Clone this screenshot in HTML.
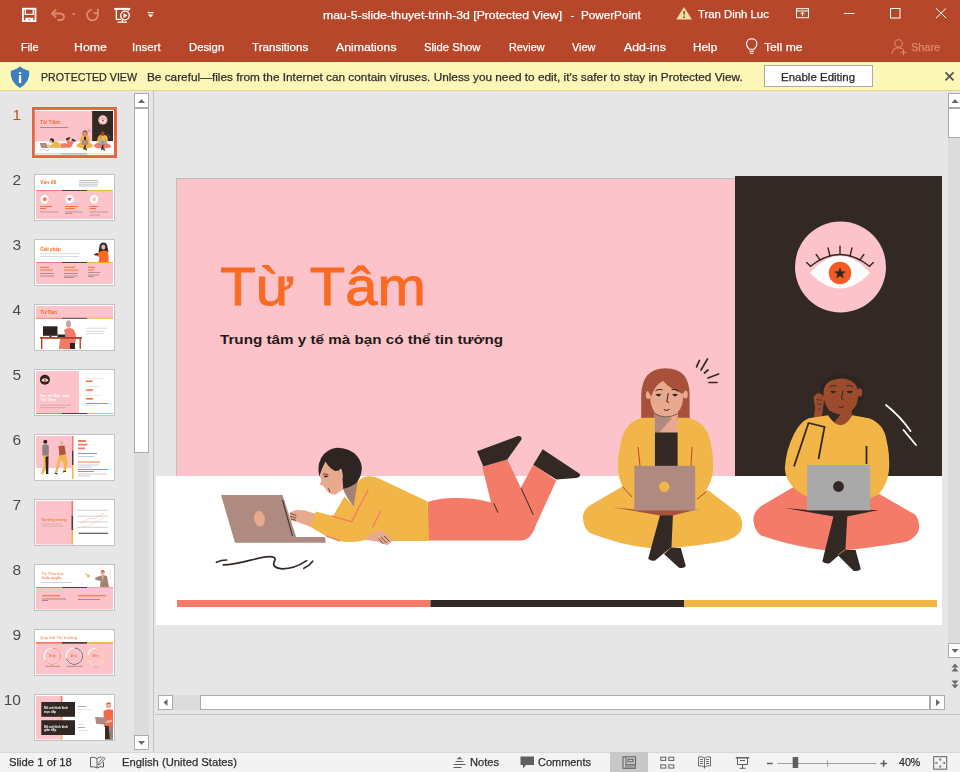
<!DOCTYPE html>
<html><head><meta charset="utf-8"><title>PowerPoint</title>
<style>
*{box-sizing:border-box;margin:0;padding:0}
html,body{width:960px;height:772px;overflow:hidden;background:#e6e6e6;font-family:"Liberation Sans",sans-serif;}
.abs{position:absolute}
#titlebar{position:absolute;left:0;top:0;width:960px;height:62px;background:#b7472a;color:#fff}
#titlebar .t{position:absolute;font-size:13px;white-space:nowrap;line-height:16px}
#tabs .t{top:39px;font-size:13px}
#pv{position:absolute;left:0;top:62px;width:960px;height:29px;background:#fcf7b6;border-bottom:1px solid #e0d98a;color:#333}
#pv .t{position:absolute;font-size:12px;white-space:nowrap;line-height:14px;top:8px}
.num{position:absolute;left:0;width:21px;text-align:right;font-size:15.5px;color:#4a4a4a;line-height:14px;will-change:transform}
.th{position:absolute;left:34px;width:81px;height:47px;background:#fff;border:1px solid #c6c6c6;overflow:hidden}
.th div{position:absolute}
.sb{position:absolute;background:#fff;border:1px solid #ababab}
#status{position:absolute;left:0;top:752px;width:960px;height:20px;background:#f3f3f3;color:#333}
#status .t{position:absolute;font-size:12px;white-space:nowrap;line-height:14px;top:3px}
.tx{position:absolute;white-space:nowrap;transform-origin:0 0;-webkit-text-stroke:.25px}
svg{position:absolute;overflow:visible}
</style></head><body>
<svg width="0" height="0" style="position:absolute">
<defs>
<symbol id="s1" viewBox="156 176 786 449" preserveAspectRatio="none">
 <rect x="156" y="476" width="786" height="149" fill="#fff"/>
 <rect x="176" y="178" width="560" height="298" fill="#bcc0bc"/>
 <rect x="177" y="179" width="559" height="297" fill="#fcc3ca"/>
 <rect x="735" y="176" width="207" height="300" fill="#332924"/>
 <rect x="177" y="600" width="253.5" height="7" fill="#f47b67"/>
 <rect x="430.5" y="600" width="253.5" height="7" fill="#332924"/>
 <rect x="684" y="600" width="253" height="7" fill="#f2b548"/>
 <!-- eye icon -->
 <circle cx="840.5" cy="267" r="45.5" fill="#fcc3ca"/>
 <path d="M810 273 Q840 239 870 273 Q840 304 810 273Z" fill="#fff"/>
 <circle cx="840" cy="273" r="11.3" fill="#f25c22"/>
 <path d="M840 267.2 L841.6 271.3 L846 271.5 L842.5 274.2 L843.7 278.4 L840 276 L836.3 278.4 L837.5 274.2 L834 271.5 L838.4 271.3Z" fill="#332924"/>
 <g stroke="#332924" stroke-width="1.4" fill="none" stroke-linecap="round">
  <path d="M810.5 266.3 Q840 242.7 869.5 266.3"/>
  <path d="M810.5 266.3 L806.7 262.5 M820 259.8 L816.2 254.5 M830 256 L828 248 M840 254.5 L840 246.3 M850 256 L852 248 M860 259.8 L863.8 254.5 M869.5 266.3 L873.3 262.5"/>
 </g>
 <!-- woman 1 lying -->
 <g>
  <!-- pants -->
  <path d="M428 502 C440 497 470 496 491 502.5 L482.3 467 L507.3 459.6 L520.8 487.7 L533.3 464.8 L556.3 480.4 L536 525 Q531 540.5 521 540.5 L428 540.5Z" fill="#f47b67"/>
  <path d="M493.7 503.3 L498 512.7 M521.2 488.3 L533.3 514.8" stroke="#332924" stroke-width="1" fill="none"/>
  <path d="M477 451.2 L518 436 Q522 435.5 521.5 439.5 L507.3 459.6 L483.3 466.5Z" fill="#332924"/>
  <path d="M542.7 449.2 L580 474 Q580.5 477.5 576 478 L556.3 479.5 L533.3 464.8Z" fill="#332924"/>
  <!-- neck -->
  <path d="M343 489 L358.5 481 L354 507 Q346 497 343 489Z" fill="#a58276"/>
  <!-- face -->
  <path d="M325.5 461 L320 476.3 L321.3 480 L320 484.6 L323.3 486 L325.3 488.5 L327.3 491.3 Q330 495 335.5 494.5 L344 488.7 L342 470 L335 462Z" fill="#e9a98f"/>
  <path d="M323 474.3 Q326 473.3 328.5 475 M328.5 488.3 Q330.3 490.8 329.5 492" stroke="#332924" stroke-width=".8" fill="none"/>
  <path d="M323.3 476 Q326 474.8 328.3 476 Q326 478.8 323.3 476Z" fill="#332924"/>
  <!-- hair -->
  <path d="M319.3 476.8 Q316.3 462 324 454 Q331 447.5 338 447.7 Q350 448 357 456 Q362.5 463 361.7 470 Q361 478 355.8 483.5 Q351 487 343.3 488.9 L342.6 480 Q343.2 474 341.8 470 Q340.5 467.3 339 470.5 L335 471 Q329 468 325.5 461.5 Q322 468 319.3 476.8Z" fill="#2e2522"/>
  <!-- hand left -->
  <path d="M289.5 512.5 L296.5 509.8 L305 510.5 L316 514 L311 527 L297 521.8 L290.5 520.5Z" fill="#e9a98f"/>
  <!-- torso -->
  <path d="M357.5 482.5 Q361 477 368 476.3 Q375 476 381 479.5 L427.7 501.5 L429 541 L392 541 L382 532 L370 538.5 Q355 544 338 541 L326.5 536.5 L310 526.5 L316 511.5 L333 516 L344.5 496.5 L353.7 506.5Z" fill="#f2b548"/>
  <!-- hand right -->
  <path d="M364 539.5 L372 532.5 L381 530.5 L387 535 L393.5 540 L387 545.3 L378 541.8Z" fill="#e9a98f"/>
  <path d="M368.3 489.2 L351.7 521.7 L331.7 515.8 M380.8 510.8 L372.5 527.5 M325.8 535.8 L340 540.8" stroke="#f47b67" stroke-width="1.3" fill="none"/>
  <path d="M290.5 513.5 L296.5 515.5 M290 516.3 L296 518 M291 519 L296 520.3 M381 537 L386.5 543 M384 536 L389.5 541.5 M378.5 538.5 L383.5 544" stroke="#332924" stroke-width=".7" fill="none"/>
  <!-- laptop -->
  <path d="M221 495 L282.5 495 L296.2 537 L325 537 L325.7 542.7 L235 542.7Z" fill="#ae8a81"/>
  <ellipse cx="259.5" cy="518.7" rx="5.3" ry="7.8" fill="#e9a98f" transform="rotate(-8 259.5 518.7)"/>
  <path d="M282.5 500 L292.5 536" stroke="#332924" stroke-width="1" fill="none"/>
  <!-- squiggle -->
  <path d="M216.5 562.3 Q221 560 226.7 560 M223.3 564.9 C238 565 255 558 266 556.8 C273 556 276.5 557.5 274.5 561 C272.5 565 274 568 282 568.8 C292 569 300 565 306.6 560.6 M303.9 568.3 Q309 566 312.7 561.2" stroke="#332924" stroke-width="1.7" fill="none" stroke-linecap="round"/>
 </g>

 <!-- woman 2 -->
 <g>
  <!-- hair -->
  <path d="M641.2 421 L641.2 395 Q642 368.2 665.6 368.2 Q689.6 368.2 689.6 395 L689.6 421Z" fill="#a8503a"/>
  <!-- neck -->
  <path d="M654.4 410 L677.8 410 L677.8 433 L654.4 433Z" fill="#e9a98f"/>
  <path d="M654.4 413 L672 418 L659 433 L654.4 433Z" fill="#b08a80"/>
  <!-- face -->
  <path d="M650.5 390 Q651 381 663.2 380.5 Q676 380 682.5 390 Q684.5 402 680 409.5 Q674 417.5 666 417.3 Q657 417 653 409.5 Q649 402 650.5 390Z" fill="#e9a98f"/>
  <ellipse cx="648.3" cy="395" rx="2.5" ry="4" fill="#e9a98f"/>
  <ellipse cx="685.3" cy="394.5" rx="2.5" ry="4" fill="#e9a98f"/>
  <path d="M663.2 381 Q655 384 651.3 396.5 L648 391 Q649 378 663.2 376Z M663.2 381 Q670 389 682.8 394 L685.5 390 Q682 377 663.2 376Z" fill="#a8503a"/>
  <path d="M655.5 390.7 Q659 388.5 662.5 389.8 M671.5 389.8 Q675 388.5 678.5 390.7 M668.3 393.2 L666.8 401.7 L669 402.5 M663.7 409.5 Q666.5 411.7 669.5 409.2" stroke="#332924" stroke-width="1" fill="none"/>
  <path d="M654.5 413.5 Q666 420 677 414" stroke="#332924" stroke-width=".6" fill="none"/>
  <path d="M655.5 394.3 Q658.5 393.3 661.5 394.3 Q658.5 398.5 655.5 394.3Z M672 394.3 Q675 393.3 678 394.3 Q675 398.5 672 394.3Z" fill="#332924"/>
  <!-- black top -->
  <rect x="654.7" y="432.5" width="23.1" height="36" fill="#332924"/>
  <!-- legs -->
  <path d="M622.4 486.6 L589.8 505.4 Q582 511 583 519 Q583.5 528 590 533 Q620 545 649 548 Q665 549 681 547 Q712 544 728 540 Q742 535 742.2 525 Q742 517 738 513 L708.5 490.6Z" fill="#f2b548"/>
  <!-- jacket -->
  <path d="M643 417.8 Q628 421 622.5 436 Q617 455 618 470 Q619 482 626 492 L640 500 L690 500 L703 494 Q712 484 713 470 Q714 452 708.5 435 Q703 421 688 417.8 L677.8 417.8 L677.8 470 L654.7 470 L654.7 417.8Z" fill="#f2b548"/>
  <path d="M638 447 L640 466 M692 447 L691 466 M622.4 486.6 L632 497 M706.6 491.6 L697 499" stroke="#b4472d" stroke-width="1" fill="none"/>
  <!-- shadow under laptop -->
  <path d="M612.5 507.2 L634 509.5 L695 509.5 L700.6 508.4 L672.9 515.5 L660 515.5Z" fill="#a8503a"/>
  <!-- feet -->
  <path d="M660 515.3 L672.9 515.3 L671.5 547 L655.1 560.5 Q651 561.5 648.2 558.8Z" fill="#332924"/>
  <path d="M664 553.9 L671 547.5 L680.8 548 L685.8 566 Q684 569 679 567.7Z" fill="#332924"/>
  <!-- laptop -->
  <rect x="634.3" y="465.8" width="60.9" height="44.7" fill="#ae8a81"/>
  <circle cx="664.3" cy="486.7" r="5.2" fill="#f2b548"/>
  <!-- sparks -->
  <path d="M699.4 360.3 L696.6 366.9 M707.5 359 L701 370 M708 370 L704.5 373 M718.5 374 L708 378 M717 382.5 L709 382.5" stroke="#332924" stroke-width="1.7" fill="none" stroke-linecap="round"/>
 </g>
 <!-- woman 3 -->
 <g>
  <!-- hair -->
  <path d="M821 392 Q819 378 836 374.5 Q858 372 863.5 388 Q866 400 858 410 L826 410Z" fill="#2e2420"/>
  <!-- neck -->
  <path d="M828.5 406 L851.8 406 L851.8 420 Q846 428 838 426 L828.5 418Z" fill="#9c4b2d"/>
  <path d="M828 410 L840.4 414.7 L834.2 422.3 L828.5 417.5Z" fill="#332924"/>
  <!-- face -->
  <path d="M823.5 392 Q824 379.5 841 378.5 Q857 379 858 392 Q859 405 852 410.5 Q846 414.5 841 414.3 Q833 414 828 408.5 Q823 402 823.5 392Z" fill="#9c4b2d"/>
  <ellipse cx="859.8" cy="392.5" rx="2.5" ry="4.2" fill="#9c4b2d"/>
  <path d="M829.5 386.7 Q833 384.7 836.5 386 M846 386 Q849.5 384.7 853 386.7 M843 389.9 L841.5 398.8 L843.3 399.5 M838.7 406.7 Q841 408.7 844 406.3" stroke="#332924" stroke-width="1" fill="none"/>
  <path d="M830 391.3 Q833.2 390.3 836.4 391.3 Q833.2 395.5 830 391.3Z M846.5 391.3 Q849.7 390.3 853 391.3 Q849.7 395.5 846.5 391.3Z" fill="#332924"/>
  <!-- hand -->
  <path d="M813.5 397 Q816 392.5 820 393.3 L824.3 396.5 L823.5 405 L820.8 423.5 L813.3 422 L815 408Z" fill="#9c4b2d"/>
  <path d="M816.5 399.5 L822 400.3 M817 404 L821.5 404.5 M818 409 L821 409.3" stroke="#332924" stroke-width=".7" fill="none"/>
  <!-- legs -->
  <path d="M796.2 485.4 L760.8 506.2 Q752.5 513 753.5 521 Q754 530 761 535.5 Q790 546 823 550 Q840 551 857 549 Q890 545 907 541.5 Q919 536 919.2 527 Q919 519 915 514.6 L875.4 491.7Z" fill="#f47b67"/>
  <!-- sweater -->
  <path d="M808.7 418.3 L828 415.3 Q841 435 852.3 415.3 L869 418.3 Q884 424 886.5 440 Q890 455 889 470 Q888 484 878 495 L866 500 L812 500 L796 490 Q785 480 784.8 468 Q786 450 794 434 Q800 422 808.7 418.3Z" fill="#f2b548"/>
  <path d="M794 466.5 L808.5 423 L824.5 427 L818.5 459 M866.5 446 L866.5 464" stroke="#332924" stroke-width="1.8" fill="none"/>
  <!-- shadow -->
  <path d="M784.2 507.9 L807 510 L870 510 L878.5 510 L847.3 516.5 L833.7 516.5Z" fill="#332924"/>
  <!-- feet -->
  <path d="M833.7 515.6 L847.3 515.6 L845.5 549.6 L829.6 563.3 Q825.5 564.3 822.3 561.5Z" fill="#332924"/>
  <path d="M837.9 555.2 L845.2 549.8 L855.6 550 L860.8 569 Q859 571.8 853.5 570.8Z" fill="#332924"/>
  <path d="M838 555 L845 549.6" stroke="#f2b548" stroke-width=".6"/>
  <!-- laptop -->
  <rect x="807.1" y="465" width="63.1" height="45.4" fill="#a9a9a9"/>
  <circle cx="838.5" cy="486.5" r="5.4" fill="#332924"/>
  <!-- white lines -->
  <path d="M886 405 Q900 416 910.5 431 M903.5 430 L916 445" stroke="#fff" stroke-width="1.8" fill="none" stroke-linecap="round"/>
 </g>
</symbol>
</defs>
</svg>
<div id="titlebar"></div>
<div id="pv"></div>
<div class="abs" style="left:764px;top:65px;width:109px;height:22px;background:#fff;border:1px solid #ababab"></div>

<!-- left pane scrollbar -->
<div class="abs" style="left:134px;top:93px;width:15px;height:657px;background:#dcdcdc"></div>
<div class="sb" style="left:134px;top:93px;width:15px;height:15px"></div>
<div class="sb" style="left:134px;top:108px;width:15px;height:345px"></div>
<div class="sb" style="left:134px;top:735px;width:15px;height:15px"></div>
<div class="abs" style="left:153px;top:91px;width:1px;height:661px;background:#c4c4c4"></div>
<!-- right scrollbar -->
<div class="abs" style="left:948px;top:93px;width:12px;height:551px;background:#dcdcdc"></div>
<div class="sb" style="left:948px;top:93px;width:15px;height:15px"></div>
<div class="sb" style="left:948px;top:108px;width:15px;height:30px"></div>
<div class="sb" style="left:948px;top:643px;width:15px;height:15px"></div>
<!-- h scrollbar -->
<div class="abs" style="left:158px;top:695px;width:787px;height:15px;background:#dcdcdc"></div>
<div class="sb" style="left:158px;top:695px;width:15px;height:15px"></div>
<div class="sb" style="left:200px;top:695px;width:730px;height:15px"></div>
<div class="sb" style="left:930px;top:695px;width:15px;height:15px"></div>
<div class="abs" style="left:155px;top:714px;width:805px;height:1px;background:#c4c4c4"></div>

<!-- slide -->
<svg style="left:156px;top:176px" width="786" height="449" viewBox="156 176 786 449"><use href="#s1" x="156" y="176" width="786" height="449"/>
 <text x="220.3" y="305" font-family="Liberation Sans, sans-serif" font-size="54.5" fill="#fa6a23" stroke="#fa6a23" stroke-width=".9" textLength="205.5" lengthAdjust="spacingAndGlyphs">Từ Tâm</text>
 <text x="220" y="344.4" font-family="Liberation Sans, sans-serif" font-size="13.2" font-weight="bold" fill="#231a17" textLength="283" lengthAdjust="spacingAndGlyphs">Trung tâm y tế mà bạn có thể tin tưởng</text>
</svg>

<div id="status"></div>
<div class="abs" style="left:0;top:752px;width:960px;height:1px;background:#d8d8d8"></div>
<div class="abs" style="left:610px;top:752px;width:38px;height:20px;background:#c8c8c8"></div>
<!-- slide numbers -->
<div class="num" style="top:108px;color:#d24726">1</div>
<div class="num" style="top:173px">2</div>
<div class="num" style="top:238px">3</div>
<div class="num" style="top:303px">4</div>
<div class="num" style="top:368px">5</div>
<div class="num" style="top:433px">6</div>
<div class="num" style="top:498px">7</div>
<div class="num" style="top:563px">8</div>
<div class="num" style="top:628px">9</div>
<div class="num" style="top:693px">10</div>
<svg style="left:0;top:0" width="160" height="772" viewBox="0 0 160 772" font-family="Liberation Sans, sans-serif">
<defs><g id="bar3"><rect x="36" y="0" width="26" height="1" fill="#f47b67"/><rect x="62" y="0" width="25" height="1" fill="#4a3f3a"/><rect x="87" y="0" width="26" height="1" fill="#f2b548"/></g></defs>
<!-- 1 selected -->
<rect x="32" y="107" width="85" height="51" fill="#e8633f"/>
<rect x="34.8" y="109.9" width="79.2" height="45.2" fill="#fff"/>
<svg x="35.3" y="110.9" width="77.9" height="43.6" viewBox="177 178 765 430" preserveAspectRatio="none" style="overflow:hidden"><use href="#s1" x="156" y="176" width="786" height="449"/></svg>
<text x="39.7" y="123.7" font-size="5.8" fill="#fa6a23" stroke="#fa6a23" stroke-width=".15">Từ Tâm</text>
<rect x="39.8" y="127.2" width="28.6" height=".7" fill="#8a6f6c"/>
<!-- frames 2-10 -->
<g fill="#fff" stroke="#c3c3c3" stroke-width="1">
<rect x="34.5" y="174.5" width="80" height="46"/><rect x="34.5" y="239.5" width="80" height="46"/><rect x="34.5" y="304.5" width="80" height="46"/><rect x="34.5" y="369.5" width="80" height="46"/><rect x="34.5" y="434.5" width="80" height="46"/><rect x="34.5" y="499.5" width="80" height="46"/><rect x="34.5" y="564.5" width="80" height="46"/><rect x="34.5" y="629.5" width="80" height="46"/><rect x="34.5" y="694.5" width="80" height="46"/>
</g>
<!-- 2 -->
<g>
<rect x="36" y="190.5" width="77" height="28.5" fill="#fcc3ca"/>
<use href="#bar3" y="190"/>
<text x="40.3" y="184.3" font-size="4.6" fill="#fa6a23" font-weight="bold" textLength="16">Vấn đề</text>
<path d="M79 180.5 H98 M79 182.3 H99 M79 184.2 H98 M79 186 H97" stroke="#9a9a9a" stroke-width=".6"/>
<circle cx="44.5" cy="199.3" r="4.2" fill="#fff"/><circle cx="69.5" cy="199.3" r="4.2" fill="#fff"/><circle cx="94" cy="199.3" r="4.2" fill="#fff"/>
<circle cx="44.8" cy="199.3" r="2" fill="#f47b67"/><path d="M67.3 198 h4.4 l-2.2 3.2z" fill="#e8507a"/><ellipse cx="94.3" cy="199.3" rx="1.6" ry="2.3" fill="#f9c9a6"/>
<path d="M40 206.5 H52 M40 208.5 H46 M65 206.5 H78 M65 208.5 H75 M89.5 206.5 H98 M89.5 208.5 H96" stroke="#fa6a23" stroke-width=".9"/>
<path d="M40 212 H58 M65 212 H83 M65 213.5 H72 M89.5 212 H108 M89.5 215 H100" stroke="#7a6560" stroke-width=".5"/>
</g>
<!-- 3 -->
<g>
<rect x="36" y="262.5" width="77" height="21.5" fill="#fcc3ca"/>
<use href="#bar3" y="262"/>
<text x="40.3" y="251.3" font-size="4.6" fill="#fa6a23" font-weight="bold" textLength="20.5">Giải pháp</text>
<path d="M40 253.7 H80 M40 256.5 H79" stroke="#b5b5b5" stroke-width=".5"/>
<path d="M99.5 246 Q100 242.5 103.5 242.5 Q107 242.5 107.5 247 L108.5 252 L98.5 252Z" fill="#3a2a26"/>
<ellipse cx="103.3" cy="247" rx="2" ry="2.6" fill="#f0b79f"/>
<path d="M99.5 252 Q103 249.5 107.5 251 Q109 256 108.5 262.3 L98.5 262.3 L99.5 257 L95.5 255.5 L96.5 253.5Z" fill="#f96a1e"/>
<path d="M94 254 l3.5 -1 l1 1.5 l-3.5 1z" fill="#3a2a26"/>
<path d="M40 267.3 H49 M40 270 H53 M64 267.3 H75 M64 270 H78 M88 267.3 H95 M88 270 H94" stroke="#fa6a23" stroke-width=".9"/>
<path d="M40 273.5 H54 M40 276 H54 M64 273.5 H78 M64 276 H78 M64 277.5 H74 M88 272.5 H100 M88 275 H99 M88 276.5 H94" stroke="#6b5550" stroke-width=".5"/>
</g>
<!-- 4 -->
<g>
<rect x="36" y="306" width="77" height="12" fill="#fcc3ca"/>
<use href="#bar3" y="317.8"/>
<text x="40.2" y="314.3" font-size="5" fill="#fa6a23" font-weight="bold" textLength="16.8">Từ Tâm</text>
<path d="M86 328.2 H107 M86 331.3 H105 M86 333.7 H104" stroke="#b0b0b0" stroke-width=".5"/>
<rect x="43" y="326.3" width="14.5" height="9.5" fill="#2e2320"/><rect x="49.5" y="335.5" width="2" height="2" fill="#2e2320"/>
<ellipse cx="68.5" cy="324" rx="2.6" ry="3.8" fill="#c9a79b"/>
<path d="M64 330 Q68 326.5 73 329 Q76.5 333 76 339 L74 349 L59 349 L60 341 Q62 337 66 337Z" fill="#f47b67"/>
<path d="M57.5 334.5 h8 v2.5 h-8z" fill="#2e2320"/>
<rect x="40" y="337" width="42" height="1.8" fill="#b5402a"/><rect x="41" y="338.5" width="1.4" height="10.5" fill="#b5402a"/><rect x="79.5" y="338.5" width="1.4" height="10.5" fill="#b5402a"/>
<path d="M60 339 h14 l-1 10 h-14z" fill="#f47b67"/><rect x="70" y="343" width="5" height="6" fill="#2e2320"/>
</g>
<!-- 5 -->
<g>
<rect x="36" y="371" width="43" height="42.5" fill="#fcc3ca"/>
<use href="#bar3" y="413"/>
<circle cx="44.9" cy="379.7" r="5" fill="#2e2320"/><path d="M41.3 380.2 Q45 376.5 48.5 380.2 Q45 383.5 41.3 380.2Z" fill="#fff"/><circle cx="45" cy="380.2" r="1.3" fill="#f25c22"/>
<text x="40" y="396.5" font-size="4.4" fill="#fff" font-weight="bold" textLength="29.5">Sự ra đời của</text>
<text x="40" y="401.2" font-size="4.4" fill="#fff" font-weight="bold">Từ Tâm</text>
<path d="M40 405.2 H71 M40 407.7 H66" stroke="#a58f8a" stroke-width=".5"/>
<path d="M86 378.5 H104 M86 386.5 H101 M86 395.5 H100 M86 405.5 H98" stroke="#c9c9c9" stroke-width=".4"/>
<path d="M86 381.3 H92.5 M86 390 H93 M86 398.8 H93" stroke="#fa6a23" stroke-width="1.6"/>
<rect x="86" y="403" width="22" height=".9" fill="#fa6a23"/>
</g>
<!-- 6 -->
<g>
<rect x="36" y="436" width="36.5" height="32" fill="#fcc3ca"/>
<rect x="72" y="436" width="1.5" height="14.5" fill="#f47b67"/><rect x="72" y="450.5" width="1.5" height="14.5" fill="#4a3f3a"/><rect x="72" y="465" width="1.5" height="14" fill="#f2b548"/>
<circle cx="45.3" cy="441.8" r="2" fill="#2e2320"/><rect x="42.3" y="444.5" width="6.5" height="11.5" rx="1.5" fill="#8d8086"/>
<path d="M43 455.5 h5.5 l-1 10 l-4.5 9 l-2 -1 l3 -9z" fill="#f2b548"/><path d="M45.5 457 l3 -1 l-.2 18 l-2.3 0z" fill="#2e2320"/>
<circle cx="61.5" cy="443" r="1.9" fill="#d9b6a6"/><path d="M58.5 446 l6 -.5 l1.5 9 l-6.5 1.5z" fill="#b5533a"/>
<path d="M59.5 455.5 l6.5 -1.3 l1.8 10 l-2.5 8 l-2 -.5 l1 -8 l-3.5 -4 l-3.5 13 l-2.2 -.6 l3 -12z" fill="#f2b548"/>
<path d="M54.5 473 l3 .8 M63 472 l3 -1" stroke="#2e2320" stroke-width="1.2"/>
<path d="M78 441 H86 M78 444.7 H87.5 M78 448.3 H85" stroke="#f47b67" stroke-width="1.8"/>
<path d="M78 453.5 H97 M78 462 H100 M78 469.5 H108 M78 471.5 H94" stroke="#fa6a23" stroke-width=".9"/>
<path d="M78 456.5 H94 M78 465 H99 M78 467 H92 M78 474 H107 M78 476 H90" stroke="#9a9a9a" stroke-width=".5"/>
</g>
<!-- 7 -->
<g>
<rect x="36" y="501" width="36" height="43.5" fill="#fcc3ca"/>
<rect x="71.5" y="501" width="1.6" height="14.5" fill="#f47b67"/><rect x="71.5" y="515.5" width="1.6" height="14.5" fill="#4a3f3a"/><rect x="71.5" y="530" width="1.6" height="14.5" fill="#f2b548"/>
<text x="41.5" y="521" font-size="4.2" fill="#fa6a23" textLength="25.3">Sự tăng trưởng</text>
<path d="M41.5 524.3 H62 M41.5 526.3 H64" stroke="#b59a95" stroke-width=".5"/>
<path d="M77 510.3 H108 M77 516.2 H108 M77 522 H108 M77 527.3 H108" stroke="#b0b0b0" stroke-width=".6"/>
<path d="M78.5 533.3 H108" stroke="#4a4a4a" stroke-width="1.1"/>
<path d="M80 523 L85 521 L89 518.5 L95 518.5 L100 515.5 L104 513" stroke="#f2b9a0" stroke-width=".6" fill="none"/>
<path d="M82 527 L88 526 L92 524 L97 521 L103 518" stroke="#f2c9b0" stroke-width=".5" fill="none"/>
</g>
<!-- 8 -->
<g>
<rect x="36" y="587.5" width="77" height="22" fill="#fcc3ca"/>
<use href="#bar3" y="587"/>
<text x="41.5" y="574.6" font-size="4" fill="#fa6a23" textLength="22.5">Từ Tâm trực</text>
<text x="41.5" y="578.8" font-size="4" fill="#fa6a23" textLength="20">thuộc quyền</text>
<path d="M41.5 582.5 H72" stroke="#a5a5a5" stroke-width=".5"/>
<circle cx="102.7" cy="572.5" r="2.2" fill="#e1a78f"/><path d="M100.6 571.5 Q102.7 568.5 104.9 571.5Z" fill="#c4472c"/>
<path d="M99.5 576 Q103 574.5 107 576 L109 587 L100 587 L100.5 581 L95 579.5 L95.5 577.5Z" fill="#a08378"/>
<path d="M101.5 576 l2.4 0 l-1.2 6z" fill="#e1a78f"/>
<circle cx="88.5" cy="576" r="1.5" fill="#f2b548"/><path d="M85 573.5 l2.5 1.5" stroke="#6b5a55" stroke-width=".5"/>
<path d="M110 570 V580" stroke="#b0b0b0" stroke-width=".4"/>
<path d="M42 595.7 H60 M78 595.7 H106" stroke="#fa6a23" stroke-width="1.1"/>
<path d="M42 599 H66 M42 600.5 H48 M78 599.5 H100" stroke="#5a4540" stroke-width=".5"/>
</g>
<!-- 9 -->
<g>
<rect x="36" y="642.3" width="77" height="32" fill="#fcc3ca"/>
<rect x="36" y="642" width="26" height="1.7" fill="#f47b67"/><rect x="62" y="642" width="25" height="1.7" fill="#4a3f3a"/><rect x="87" y="642" width="26" height="1.7" fill="#f2b548"/>
<text x="40" y="639.2" font-size="4" fill="#fa6a23" textLength="37">Quy mô Thị trường</text>
<g fill="none" stroke-width="1.1"><circle cx="52.4" cy="656.2" r="8.2" stroke="#fff"/><circle cx="74.3" cy="656.2" r="8.2" stroke="#fff"/><circle cx="96" cy="656.2" r="8.2" stroke="#fff"/>
<path d="M52.4 648 A8.2 8.2 0 1 1 45 660" stroke="#f96a3a" stroke-width=".8"/><path d="M74.3 648 A8.2 8.2 0 1 1 66.5 658.5" stroke="#4a3f3a" stroke-width=".8"/><path d="M96 648 A8.2 8.2 0 1 1 88 654.5" stroke="#f2b548" stroke-width=".8"/></g>
<text x="48.5" y="657.3" font-size="3" fill="#fa6a23" font-weight="bold">10 tỷ</text><text x="70.5" y="657.3" font-size="3" fill="#fa6a23" font-weight="bold">50 tr</text><text x="92.3" y="657.3" font-size="3" fill="#fa6a23" font-weight="bold">80 tr</text>
<path d="M45.5 666.3 H60 M66.5 666.3 H82.5" stroke="#6b5550" stroke-width=".5"/><path d="M94 667.3 H99" stroke="#b59a95" stroke-width=".4"/>
</g>
<!-- 10 -->
<g>
<rect x="36" y="696" width="26" height="43.5" fill="#fcc3ca"/>
<rect x="60.8" y="696" width="1.6" height="22" fill="#f47b67"/><rect x="60.8" y="718" width="1.6" height="21.5" fill="#f2b548"/>
<rect x="41.3" y="702" width="33.7" height="14.8" fill="#312723"/><rect x="41.3" y="720.2" width="33.7" height="14.8" fill="#312723"/>
<text x="44" y="709.3" font-size="3" fill="#fff" font-weight="bold">Mô mô hình kinh</text><text x="44" y="712.8" font-size="3" fill="#fff" font-weight="bold">trực tiếp</text>
<text x="44" y="727.5" font-size="3" fill="#fff" font-weight="bold">Mô mô hình kinh</text><text x="44" y="731" font-size="3" fill="#fff" font-weight="bold">gián tiếp</text>
<path d="M78 706.5 H86 M78 727.5 H85" stroke="#5a5a5a" stroke-width=".5"/><path d="M78 709.5 H91 M78 712.5 H81 M78 724.5 H84 M78 730.5 H88" stroke="#bdbdbd" stroke-width=".4"/>
<circle cx="108.5" cy="705.5" r="2.8" fill="#e6b29c"/><path d="M106 704 Q108.5 700.5 111.3 704Z" fill="#d9603f"/>
<path d="M103.5 711 Q108 708 113 710 L113 727 L104 727Z" fill="#f4694a"/>
<path d="M105 726 h8 v13.5 h-8z" fill="#3a2a26"/><path d="M108.5 726 h4.5 v13 h-3z" fill="#a08378"/>
<path d="M95 717 l11 .5 l.8 7 l-10.5 -.5z" fill="#b08a80"/><path d="M106 721 l6 -1.5 l.5 2 l-6 2z" fill="#e6b29c"/>
</g>
</svg>
<svg style="left:0;top:0" width="960" height="772" viewBox="0 0 960 772">
<!-- title bar icons -->
<g fill="none" stroke="#fff" stroke-width="1.8">
 <rect x="22.9" y="8.7" width="12.6" height="12.4"/>
 <path d="M25.2 8.6 V14.3 H33.2 V8.6" stroke-width="1.2"/>
</g>
<path d="M25.3 17.8 h8 v3.6 h-3 v-2 h-2 v2 h-3z" fill="#fff"/>
<g fill="none" stroke="#de8a70" stroke-width="1.8">
 <path d="M56 9.5 L52 13.5 L56 17.5 M52.5 13.5 H60 Q64 13.8 64 17 Q64 20 60 20 H57.5"/>
 <path d="M98 8.8 V13.2 H93.6 M97.5 13 A5.4 5.4 0 1 1 91.6 9.6"/>
</g>
<path d="M71.7 13.3 h4.2 l-2.1 2.2z" fill="#de8a70"/>
<g fill="none" stroke="#fff" stroke-width="1.3">
 <path d="M114.3 8.9 H130.3" stroke-width="2"/>
 <path d="M116.3 9.5 V19.3 H121 M128.3 9.5 V11 M122.3 19.5 V22 M117.5 22.2 H127"/>
 <circle cx="125" cy="15.5" r="4.3"/>
</g>
<path d="M123.5 13 L127.3 15.5 L123.5 18z" fill="#fff"/>
<path d="M147.8 12 h5.6 v1.2 h-5.6z M147.8 14.4 h5.6 l-2.8 3.1z" fill="#fff"/>
<!-- warning -->
<path d="M684 7 L692 19.4 H676.2z" fill="#f7dca4"/>
<path d="M683.3 11 h1.6 l-.3 4.6 h-1z M683.3 16.5 h1.6 v1.5 h-1.6z" fill="#5a4a2a"/>
<!-- ribbon display -->
<g fill="none" stroke="#fff" stroke-width="1">
 <rect x="796.5" y="8.7" width="12" height="9"/>
 <path d="M796.5 11 H808.5 M802.5 16.3 V12.3 M800.5 14.2 L802.5 12.2 L804.5 14.2"/>
 <path d="M844 13.5 H854.5"/>
 <rect x="890.5" y="8.5" width="9.5" height="9.5"/>
 <path d="M936 8.2 L946.2 18.2 M946.2 8.2 L936 18.2"/>
</g>
<!-- tab icons -->
<g fill="none" stroke="#fff" stroke-width="1.1">
 <path d="M749.3 49.3 Q746.3 46.5 746.5 43.5 Q747 38.8 751.7 38.7 Q756.4 38.8 756.9 43.5 Q757 46.5 754 49.3 Z M749.3 51.2 H754 M749.8 53.2 H753.5"/>
</g>
<g fill="none" stroke="#de8a70" stroke-width="1.1">
 <circle cx="898.5" cy="43.5" r="3.8"/>
 <path d="M892 54 Q892.5 48 898.5 47.8 Q901 47.8 902.5 49 M903.5 49.3 V55.3 M900.5 52.3 H906.5"/>
</g>
<!-- shield -->
<path d="M20 66.5 Q24 70 29.3 71 Q29.8 76 27.5 80.5 Q25 85 20 88 Q15 85 12.5 80.5 Q10.2 76 10.7 71 Q16 70 20 66.5Z" fill="#3f7dbe"/>
<path d="M18.9 72.2 h2.3 v1.9 h-2.3z M18.9 75.3 h2.3 v7.6 h-2.3z" fill="#fff"/>
<path d="M945.5 72.3 L953.5 80.3 M953.5 72.3 L945.5 80.3" stroke="#555" stroke-width="1.8" fill="none"/>
<!-- scroll arrows -->
<g fill="#6a6a6a">
 <path d="M138 103 h7 l-3.5 -4z"/>
 <path d="M138 741 h7 l-3.5 4z"/>
 <path d="M951.5 103 h7 l-3.5 -4z"/>
 <path d="M951.5 649 h7 l-3.5 4z"/>
 <path d="M167.5 699 v7 l-4 -3.5z"/>
 <path d="M936 699 v7 l4 -3.5z"/>
 <path d="M951.5 667.5 h7 l-3.5 -4z M951.5 671.5 h7 l-3.5 -4z"/>
 <path d="M951.5 680.5 h7 l-3.5 4z M951.5 684.5 h7 l-3.5 4z"/>
</g>
<!-- status bar icons -->
<g fill="none" stroke="#5f5f5f" stroke-width="1">
 <path d="M90.5 757.5 Q94 756.5 97 758.5 V768 Q94 766 90.5 767z M97 758.5 Q99 757 101.5 757 M97 768 Q100 766 103.5 767 V762"/>
 <path d="M100 764.5 L105 758.5 L103.3 757 L98.8 762.8 L98.5 765z" fill="#f3f3f3" stroke-width=".9"/>
 <path d="M455.5 761.5 H463.5 M453.5 764.5 H465.5 M453.5 767.5 H461.5"/>
 <path d="M456.5 759.3 L459.5 756.8 L462.5 759.3z" fill="#5f5f5f" stroke="none"/>
 <rect x="623" y="756.8" width="12.5" height="11.5"/>
 <path d="M626 756.8 V768.3 M626 764.7 H635.5"/>
 <rect x="628" y="759.3" width="5" height="2.4"/>
 <rect x="660.8" y="757.2" width="5" height="3.2"/><rect x="668.8" y="757.2" width="5" height="3.2"/>
 <rect x="660.8" y="764.9" width="5" height="3.2"/><rect x="668.8" y="764.9" width="5" height="3.2"/>
 <path d="M704.5 758 Q701.5 756 698.5 757 V766 Q701.5 765.3 704.5 767 Q707.5 765.3 710.5 766 V757 Q707.5 756 704.5 758 V768.5 M700 759.5 H703 M700 761.5 H703 M700 763.5 H703 M706 759.5 H709 M706 761.5 H709 M706 763.5 H709" stroke-width=".9"/>
 <path d="M735.8 757.8 H749.2" stroke-width="1.5"/>
 <path d="M737.5 758 V764.5 H747.5 V758 M742.5 764.5 V768 M739.5 768.3 H745.5 M740 760.5 H745"/>
 <path d="M777.2 763.5 H876.4 M827.5 760.5 V766.5" stroke="#8a8a8a" stroke-width=".8"/>
 <path d="M767 763.5 H772.7 M880.4 763.5 H887 M883.7 760.3 V766.7" stroke-width="1.6"/>
 <rect x="933.7" y="756.7" width="13" height="12.5"/>
 <path d="M940.2 758.5 V761 M940.2 765 V767.5 M935.5 763 H938 M942.5 763 H945 M939 759.7 L940.2 758.5 L941.4 759.7 M939 766.3 L940.2 767.5 L941.4 766.3 M936.7 761.8 L935.5 763 L936.7 764.2 M943.8 761.8 L945 763 L943.8 764.2" stroke-width=".8"/>
</g>
<rect x="626" y="765" width="9.5" height="3" fill="#9a9a9a"/>
<rect x="792.7" y="757" width="5.5" height="11" fill="#5f5f5f"/>
<path d="M520.5 756.5 h13.5 v8.5 h-8 l-3 3.5 v-3.5 h-2.5z" fill="#5f5f5f"/>
</svg>
<div style="position:absolute;left:0;top:0;width:960px;height:772px;will-change:transform">
<div class="tx" style="left:322.70px;top:8.80px;font-size:11.7px;line-height:11.7px;color:#fff;transform:scaleX(1.0465)">mau-5-slide-thuyet-trinh-3d [Protected View]</div>
<div class="tx" style="left:570.50px;top:8.80px;font-size:11.7px;line-height:11.7px;color:#fff;transform:scaleX(1.0000)">-</div>
<div class="tx" style="left:580.50px;top:8.80px;font-size:11.7px;line-height:11.7px;color:#fff;transform:scaleX(0.9997)">PowerPoint</div>
<div class="tx" style="left:698.00px;top:7.70px;font-size:11.7px;line-height:11.7px;color:#fff;transform:scaleX(0.9709)">Tran Dinh Luc</div>
<div class="tx" style="left:20.70px;top:40.70px;font-size:11.7px;line-height:11.7px;color:#fff;transform:scaleX(0.9273)">File</div>
<div class="tx" style="left:73.70px;top:40.70px;font-size:11.7px;line-height:11.7px;color:#fff;transform:scaleX(1.0529)">Home</div>
<div class="tx" style="left:132.32px;top:40.70px;font-size:11.7px;line-height:11.7px;color:#fff;transform:scaleX(0.9799)">Insert</div>
<div class="tx" style="left:189.30px;top:40.70px;font-size:11.7px;line-height:11.7px;color:#fff;transform:scaleX(0.9671)">Design</div>
<div class="tx" style="left:252.30px;top:40.70px;font-size:11.7px;line-height:11.7px;color:#fff;transform:scaleX(0.9915)">Transitions</div>
<div class="tx" style="left:336.00px;top:40.70px;font-size:11.7px;line-height:11.7px;color:#fff;transform:scaleX(1.0471)">Animations</div>
<div class="tx" style="left:424.00px;top:40.70px;font-size:11.7px;line-height:11.7px;color:#fff;transform:scaleX(0.9656)">Slide Show</div>
<div class="tx" style="left:508.70px;top:40.70px;font-size:11.7px;line-height:11.7px;color:#fff;transform:scaleX(0.9259)">Review</div>
<div class="tx" style="left:572.30px;top:40.70px;font-size:11.7px;line-height:11.7px;color:#fff;transform:scaleX(0.9346)">View</div>
<div class="tx" style="left:624.00px;top:40.70px;font-size:11.7px;line-height:11.7px;color:#fff;transform:scaleX(1.0557)">Add-ins</div>
<div class="tx" style="left:693.30px;top:40.70px;font-size:11.7px;line-height:11.7px;color:#fff;transform:scaleX(1.0066)">Help</div>
<div class="tx" style="left:764.00px;top:40.70px;font-size:11.7px;line-height:11.7px;color:#fff;transform:scaleX(1.0406)">Tell me</div>
<div class="tx" style="left:911.30px;top:40.70px;font-size:11.7px;line-height:11.7px;color:#de8a70;transform:scaleX(0.9352)">Share</div>
<div class="tx" style="left:40.70px;top:70.70px;font-size:11.7px;line-height:11.7px;color:#2e2e2e;transform:scaleX(0.9129)">PROTECTED VIEW</div>
<div class="tx" style="left:147.30px;top:70.70px;font-size:11.7px;line-height:11.7px;color:#2e2e2e;transform:scaleX(1.0097)">Be careful—files from the Internet can contain viruses. Unless you need to edit, it&#x27;s safer to stay in Protected View.</div>
<div class="tx" style="left:780.70px;top:70.70px;font-size:11.7px;line-height:11.7px;color:#262626;transform:scaleX(0.9830)">Enable Editing</div>
<div class="tx" style="left:8.70px;top:756.40px;font-size:11.7px;line-height:11.7px;color:#2e2e2e;transform:scaleX(0.9662)">Slide 1 of 18</div>
<div class="tx" style="left:121.70px;top:756.40px;font-size:11.7px;line-height:11.7px;color:#2e2e2e;transform:scaleX(0.9612)">English (United States)</div>
<div class="tx" style="left:470.30px;top:756.40px;font-size:11.7px;line-height:11.7px;color:#2e2e2e;transform:scaleX(0.9548)">Notes</div>
<div class="tx" style="left:537.50px;top:756.40px;font-size:11.7px;line-height:11.7px;color:#2e2e2e;transform:scaleX(0.9372)">Comments</div>
<div class="tx" style="left:899.00px;top:756.40px;font-size:11.7px;line-height:11.7px;color:#2e2e2e;transform:scaleX(0.9130)">40%</div>
</div>
</body></html>
